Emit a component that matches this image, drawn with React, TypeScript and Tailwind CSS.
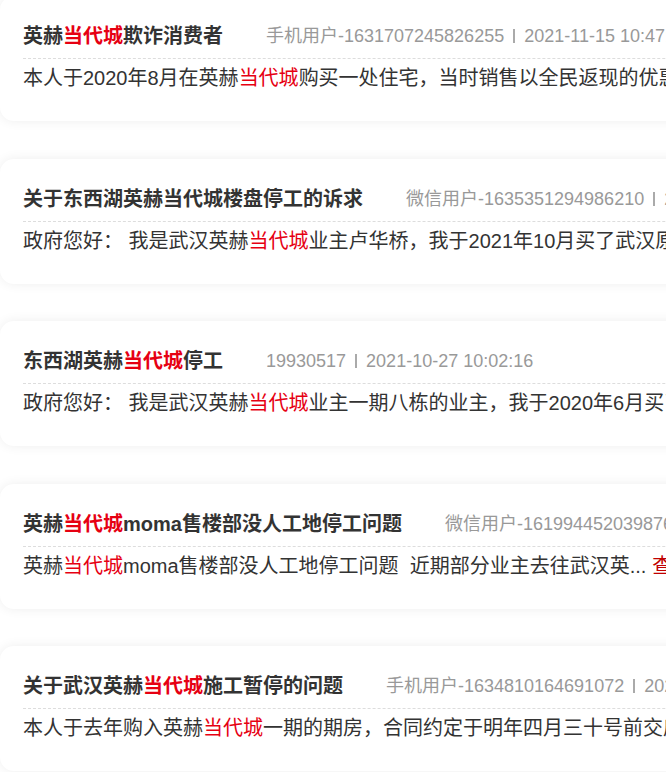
import React from "react";

type Part = { t: string; red?: boolean };

const R = "当代城";

const items: {
  title: Part[];
  meta: [string, string];
  body: Part[];
  more?: boolean;
}[] = [
  {
    title: [{ t: "英赫" }, { t: R, red: true }, { t: "欺诈消费者" }],
    meta: ["手机用户-1631707245826255", "2021-11-15 10:47:27"],
    body: [
      { t: "本人于2020年8月在英赫" },
      { t: R, red: true },
      { t: "购买一处住宅，当时销售以全民返现的优惠活动进行宣传" },
    ],
  },
  {
    title: [{ t: "关于东西湖英赫当代城楼盘停工的诉求" }],
    meta: ["微信用户-1635351294986210", "2021-10-28 09:12:40"],
    body: [
      { t: "政府您好： 我是武汉英赫" },
      { t: R, red: true },
      { t: "业主卢华桥，我于2021年10月买了武汉原" },
    ],
  },
  {
    title: [{ t: "东西湖英赫" }, { t: R, red: true }, { t: "停工" }],
    meta: ["19930517", "2021-10-27 10:02:16"],
    body: [
      { t: "政府您好： 我是武汉英赫" },
      { t: R, red: true },
      { t: "业主一期八栋的业主，我于2020年6月买了" },
    ],
  },
  {
    title: [{ t: "英赫" }, { t: R, red: true }, { t: "moma售楼部没人工地停工问题" }],
    meta: ["微信用户-1619944520398765", "2021-10-20 15:31:08"],
    body: [
      { t: "英赫" },
      { t: R, red: true },
      { t: "moma售楼部没人工地停工问题\u00a0\u00a0近期部分业主去往武汉英..." },
    ],
    more: true,
  },
  {
    title: [{ t: "关于武汉英赫" }, { t: R, red: true }, { t: "施工暂停的问题" }],
    meta: ["手机用户-1634810164691072", "2021-10-21 18:05:33"],
    body: [
      { t: "本人于去年购入英赫" },
      { t: R, red: true },
      { t: "一期的期房，合同约定于明年四月三十号前交房" },
    ],
  },
];

function Parts({ parts }: { parts: Part[] }) {
  return (
    <>
      {parts.map((p, i) =>
        p.red ? (
          <span key={i} className="text-[#e60012]">
            {p.t}
          </span>
        ) : (
          <span key={i}>{p.t}</span>
        )
      )}
    </>
  );
}

export default function App() {
  return (
    <div
      className="w-[666px] h-[772px] overflow-hidden bg-white"
      style={{ fontFamily: '"Liberation Sans", Arial, "Noto Sans CJK SC", sans-serif' }}
    >
      <div className="flex flex-col gap-[37.5px] -mt-[4px] w-[900px]">
        {items.map((it, i) => (
          <div
            key={i}
            className="h-[125px] rounded-[14px] bg-white shadow-[0_0_12px_rgba(0,0,0,0.07)] pt-[26px] pl-[23px]"
          >
            <div className="flex items-center h-[28px] whitespace-nowrap">
              <span className="text-[20px] font-bold text-[#333] leading-[28px]">
                <Parts parts={it.title} />
              </span>
              <span className="ml-[43px] text-[18px] text-[#999] leading-[28px] flex items-center">
                <span>{it.meta[0]}</span>
                <span className="inline-block w-[2px] h-[14px] bg-[#aaa] mx-[9px]" />
                <span>{it.meta[1]}</span>
              </span>
            </div>
            <div className="mt-[8px] border-t border-dashed border-[#ddd] pt-[6px] text-[20px] text-[#333] leading-[26px] whitespace-nowrap">
              <Parts parts={it.body} />
              {it.more && <span className="ml-[6px] text-[#c00000]">查看详情</span>}
            </div>
          </div>
        ))}
      </div>
    </div>
  );
}
